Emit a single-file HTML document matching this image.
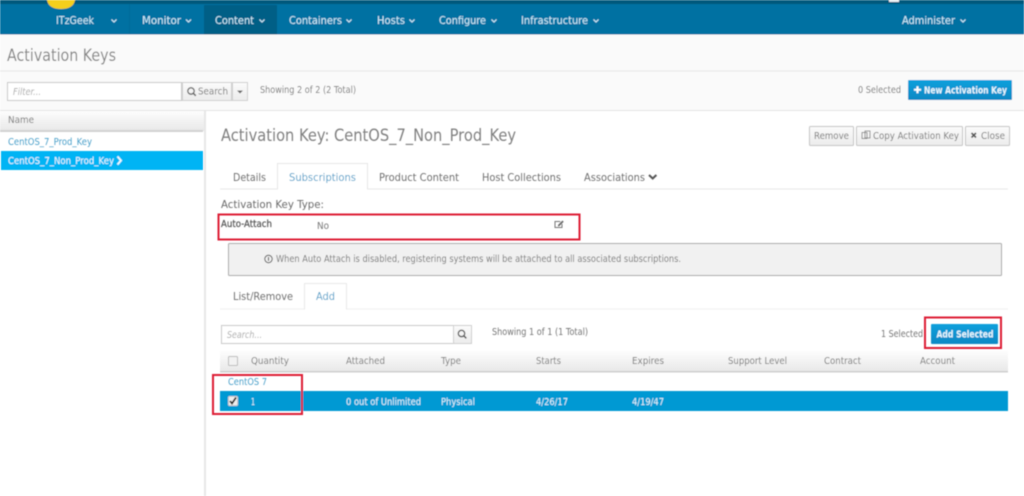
<!DOCTYPE html>
<html><head><meta charset="utf-8"><title>Activation Keys</title>
<style>
html,body{margin:0;padding:0;background:#fff;width:1024px;height:496px;overflow:hidden}
svg{display:block}
text{font-family:"DejaVu Sans","Liberation Sans",sans-serif;font-size:10px;fill:#6a6a6a}
.n{font-size:11px;fill:#cfeefb}
.t{font-size:10.500px;fill:#707070}
.h{font-size:10px;fill:#757575}
.w{fill:#e6f6fc}
.l{fill:#4a9fc9}
.b{fill:#777}
.c{fill:none;stroke:#cfeefb;stroke-width:1.100}
</style></head><body>
<svg width="1024" height="496" viewBox="0 0 1024 496" xmlns="http://www.w3.org/2000/svg">
<defs>
<linearGradient id="hd" x1="0" y1="0" x2="0" y2="1"><stop offset="0" stop-color="#fdfdfd"/><stop offset="1" stop-color="#e8e8e8"/></linearGradient>
<linearGradient id="bt" x1="0" y1="0" x2="0" y2="1"><stop offset="0" stop-color="#fbfbfb"/><stop offset="1" stop-color="#ececec"/></linearGradient>
<linearGradient id="bl" x1="0" y1="0" x2="0" y2="1"><stop offset="0" stop-color="#10a0dc"/><stop offset="1" stop-color="#0a88c4"/></linearGradient>
<filter id="s" x="0" y="0" width="100%" height="100%"><feGaussianBlur stdDeviation="0.4"/></filter>
</defs>
<g filter="url(#s)">
<!-- top nav -->
<rect width="1024" height="34.500" fill="#0071a2"/>
<rect width="1024" height="4" fill="#00597c"/>
<path d="M47 0h28c-1 6-6 9-14 9s-13-3-14-9z" fill="#f4cf1e"/>
<rect x="889" y="0" width="10" height="2" fill="#e8eef2"/>
<rect x="129" y="4" width="1" height="30" fill="#006a99"/>
<rect x="204" y="5" width="73" height="29.500" fill="#005f86"/>
<text class="n" x="56" y="24" textLength="38" lengthAdjust="spacingAndGlyphs">ITzGeek</text>
<path class="c" d="M111.500 19.500l2.500 2.500 2.500-2.500"/>
<text class="n" x="142" y="24" textLength="39" lengthAdjust="spacingAndGlyphs">Monitor</text>
<path class="c" d="M186 19.500l2.500 2.500 2.500-2.500"/>
<text class="n" x="215" y="24" textLength="39" lengthAdjust="spacingAndGlyphs">Content</text>
<path class="c" d="M259.500 19.500l2.500 2.500 2.500-2.500"/>
<text class="n" x="289" y="24" textLength="53" lengthAdjust="spacingAndGlyphs">Containers</text>
<path class="c" d="M346.500 19.500l2.500 2.500 2.500-2.500"/>
<text class="n" x="377" y="24" textLength="28" lengthAdjust="spacingAndGlyphs">Hosts</text>
<path class="c" d="M409.500 19.500l2.500 2.500 2.500-2.500"/>
<text class="n" x="439" y="24" textLength="47" lengthAdjust="spacingAndGlyphs">Configure</text>
<path class="c" d="M491.500 19.500l2.500 2.500 2.500-2.500"/>
<text class="n" x="521" y="24" textLength="67" lengthAdjust="spacingAndGlyphs">Infrastructure</text>
<path class="c" d="M593.500 19.500l2.500 2.500 2.500-2.500"/>
<text class="n" x="902" y="24" textLength="53" lengthAdjust="spacingAndGlyphs">Administer</text>
<path class="c" d="M960.500 19.500l2.500 2.500 2.500-2.500"/>

<!-- page header + toolbar -->
<rect y="34.500" width="1024" height="75.500" fill="#fafafa"/>
<rect y="70.500" width="1024" height="1" fill="#e6e6e6"/>
<rect y="110" width="1024" height="1" fill="#e4e4e4"/>
<text x="7" y="61" style="font-size:17px;fill:#858585" textLength="109" lengthAdjust="spacingAndGlyphs">Activation Keys</text>
<rect x="7.500" y="82.500" width="174" height="18" fill="#fff" stroke="#c8c8c8"/>
<text x="13" y="95" style="font-size:9.500px;font-style:italic;fill:#aaa" textLength="28" lengthAdjust="spacingAndGlyphs">Filter...</text>
<rect x="182.500" y="82.500" width="49" height="18" fill="url(#bt)" stroke="#cfcfcf"/>
<circle cx="191" cy="91" r="3.200" fill="none" stroke="#666" stroke-width="1.300"/><path d="M193.300 93.300l2.500 2.500" stroke="#666" stroke-width="1.500"/>
<text x="198" y="94.500" class="b" style="font-size:10px" textLength="30" lengthAdjust="spacingAndGlyphs">Search</text>
<rect x="232.500" y="82.500" width="15" height="18" fill="url(#bt)" stroke="#cfcfcf"/>
<path d="M237 90.500h6l-3 3z" fill="#666"/>
<text x="260" y="93" class="h" textLength="96" lengthAdjust="spacingAndGlyphs">Showing 2 of 2 (2 Total)</text>
<text x="858" y="93" class="h" textLength="43" lengthAdjust="spacingAndGlyphs">0 Selected</text>
<rect x="908" y="80" width="104" height="20" rx="1" fill="url(#bl)"/>
<path d="M914 89.700h7M917.500 86.200v7" stroke="#fff" stroke-width="2"/>
<text x="924" y="93.500" style="font-size:10px;font-weight:bold;fill:#eaf8fe" textLength="83" lengthAdjust="spacingAndGlyphs">New Activation Key</text>

<!-- left panel -->
<rect x="0" y="111" width="204" height="20" fill="url(#hd)"/>
<rect x="0" y="130" width="203" height="2" fill="#d2d2d2"/>
<rect x="204" y="111" width="2" height="385" fill="#e6e6e6"/>
<text x="8" y="123" class="b" style="font-size:10px" textLength="26" lengthAdjust="spacingAndGlyphs">Name</text>
<text x="8" y="145" class="l" style="font-size:10px" textLength="84" lengthAdjust="spacingAndGlyphs">CentOS_7_Prod_Key</text>
<rect x="1" y="151" width="202" height="19" fill="#00b4f4"/>
<text x="8" y="164" style="font-size:10px;fill:#f2fbff" textLength="106" lengthAdjust="spacingAndGlyphs">CentOS_7_Non_Prod_Key</text>
<path d="M117.500 156.500l3.500 4-3.500 4" fill="none" stroke="#f2fbff" stroke-width="1.800"/>

<!-- detail header -->
<text x="221" y="141" style="font-size:17px;fill:#808080" textLength="295" lengthAdjust="spacingAndGlyphs">Activation Key: CentOS_7_Non_Prod_Key</text>
<rect x="809.500" y="126.500" width="44" height="19" rx="1" fill="url(#bt)" stroke="#c4c4c4"/>
<text x="814" y="139" class="b" style="font-size:10px" textLength="35" lengthAdjust="spacingAndGlyphs">Remove</text>
<rect x="856.500" y="126.500" width="106" height="19" rx="1" fill="url(#bt)" stroke="#c4c4c4"/>
<rect x="862" y="132.500" width="5" height="6" fill="none" stroke="#777" stroke-width="0.800"/><rect x="865" y="131" width="5" height="7" fill="none" stroke="#777" stroke-width="0.800"/>
<text x="873" y="139" class="b" style="font-size:10px" textLength="86" lengthAdjust="spacingAndGlyphs">Copy Activation Key</text>
<rect x="965.500" y="126.500" width="44" height="19" rx="1" fill="url(#bt)" stroke="#c4c4c4"/>
<path d="M971.500 133l4.500 4.500M976 133l-4.500 4.500" stroke="#555" stroke-width="1.700"/>
<text x="981" y="139" class="b" style="font-size:10px" textLength="24" lengthAdjust="spacingAndGlyphs">Close</text>

<!-- tabs -->
<rect x="220" y="188.500" width="788" height="1" fill="#e8e8e8"/>
<path d="M277.500 189.500v-26h90v26" fill="#fff" stroke="#e6e6e6"/>
<text x="233" y="181" class="t" textLength="33" lengthAdjust="spacingAndGlyphs">Details</text>
<text x="289" y="181" class="t" style="fill:#4a9fc9" textLength="67" lengthAdjust="spacingAndGlyphs">Subscriptions</text>
<text x="379" y="181" class="t" textLength="80" lengthAdjust="spacingAndGlyphs">Product Content</text>
<text x="482" y="181" class="t" textLength="79" lengthAdjust="spacingAndGlyphs">Host Collections</text>
<text x="584" y="181" class="t" textLength="61" lengthAdjust="spacingAndGlyphs">Associations</text>
<path d="M649 175l3.700 3.500 3.700-3.500" fill="none" stroke="#555" stroke-width="2"/>

<text x="221" y="208" class="t" style="fill:#6a6a6a" textLength="103" lengthAdjust="spacingAndGlyphs">Activation Key Type:</text>
<text x="221" y="227" style="font-size:10px;fill:#555;stroke:#555;stroke-width:.25" textLength="51" lengthAdjust="spacingAndGlyphs">Auto-Attach</text>
<text x="317" y="229" class="h" textLength="12" lengthAdjust="spacingAndGlyphs">No</text>
<path d="M554.500 221.500h5.500v-.1M555 221.500v6h7v-3.500" fill="none" stroke="#777" stroke-width="1"/>
<path d="M558 225l4.500-4.500 1.200 1.200-4.500 4.500h-1.200z" fill="#666"/>
<rect x="218.500" y="214.500" width="361" height="25" fill="none" stroke="#dd1f35" stroke-width="2"/>

<!-- info box -->
<rect x="228.500" y="243.500" width="773" height="32" rx="1" fill="#f1f1f1" stroke="#a9a9a9"/>
<circle cx="268.500" cy="259" r="3.700" fill="none" stroke="#555" stroke-width="1"/><path d="M268.500 257v3.800" stroke="#555" stroke-width="1.100"/>
<text x="276" y="262" class="h" textLength="405" lengthAdjust="spacingAndGlyphs">When Auto Attach is disabled, registering systems will be attached to all associated subscriptions.</text>

<!-- sub tabs -->
<rect x="220" y="308.500" width="788" height="1" fill="#f0f0f0"/>
<path d="M304.500 309.500v-26h42v26" fill="#fff" stroke="#e8e8e8"/>
<text x="233" y="300" class="t" textLength="60" lengthAdjust="spacingAndGlyphs">List/Remove</text>
<text x="316" y="300" class="t" style="fill:#4a9fc9" textLength="19" lengthAdjust="spacingAndGlyphs">Add</text>

<!-- search row -->
<rect x="221.500" y="325.500" width="232" height="18" fill="#fff" stroke="#c8c8c8"/>
<text x="227" y="338" style="font-size:9.500px;font-style:italic;fill:#aaa" textLength="35" lengthAdjust="spacingAndGlyphs">Search...</text>
<rect x="453.500" y="325.500" width="18" height="18" fill="url(#bt)" stroke="#cfcfcf"/>
<circle cx="461.500" cy="333.500" r="3.200" fill="none" stroke="#555" stroke-width="1.300"/><path d="M463.800 335.800l2.500 2.500" stroke="#555" stroke-width="1.500"/>
<text x="492" y="335" class="h" textLength="96" lengthAdjust="spacingAndGlyphs">Showing 1 of 1 (1 Total)</text>
<text x="881" y="337" class="h" textLength="42" lengthAdjust="spacingAndGlyphs">1 Selected</text>
<rect x="931" y="324" width="67" height="20" rx="1" fill="url(#bl)"/>
<text x="936.500" y="337.500" style="font-size:10px;font-weight:bold;fill:#eaf8fe" textLength="57" lengthAdjust="spacingAndGlyphs">Add Selected</text>
<rect x="925" y="317.500" width="76" height="30.500" fill="none" stroke="#dd1f35" stroke-width="2"/>

<!-- table -->
<rect x="220" y="351" width="788" height="20" fill="url(#hd)"/>
<rect x="220" y="371" width="788" height="1.500" fill="#cfcfcf"/>
<rect x="228.500" y="356.500" width="9" height="9" rx="1" fill="#f2f2f2" stroke="#bbb"/>
<text x="251" y="364" class="b" textLength="38" lengthAdjust="spacingAndGlyphs">Quantity</text>
<text x="346" y="364" class="b" textLength="39" lengthAdjust="spacingAndGlyphs">Attached</text>
<text x="441" y="364" class="b" textLength="20" lengthAdjust="spacingAndGlyphs">Type</text>
<text x="536" y="364" class="b" textLength="25" lengthAdjust="spacingAndGlyphs">Starts</text>
<text x="632" y="364" class="b" textLength="32" lengthAdjust="spacingAndGlyphs">Expires</text>
<text x="728" y="364" class="b" textLength="59" lengthAdjust="spacingAndGlyphs">Support Level</text>
<text x="824" y="364" class="b" textLength="37" lengthAdjust="spacingAndGlyphs">Contract</text>
<text x="920" y="364" class="b" textLength="35" lengthAdjust="spacingAndGlyphs">Account</text>
<text x="228" y="385" class="l" style="font-size:10px" textLength="39" lengthAdjust="spacingAndGlyphs">CentOS 7</text>
<rect x="220" y="391" width="788" height="20" fill="#0099d3"/>
<rect x="228.500" y="396.500" width="9" height="9" rx="1" fill="#eee" stroke="#ccc"/>
<path d="M230 401l2 2.500 4-6" fill="none" stroke="#222" stroke-width="1.800"/>
<text x="251" y="405" class="w" textLength="4" lengthAdjust="spacingAndGlyphs">1</text>
<text x="346" y="405" class="w" textLength="75" lengthAdjust="spacingAndGlyphs">0 out of Unlimited</text>
<text x="441" y="405" class="w" textLength="34" lengthAdjust="spacingAndGlyphs">Physical</text>
<text x="536" y="405" class="w" textLength="32" lengthAdjust="spacingAndGlyphs">4/26/17</text>
<text x="632" y="405" class="w" textLength="32" lengthAdjust="spacingAndGlyphs">4/19/47</text>
<rect x="213" y="375" width="89" height="39" fill="none" stroke="#dd1f35" stroke-width="2"/>
</g>
</svg>
</body></html>
